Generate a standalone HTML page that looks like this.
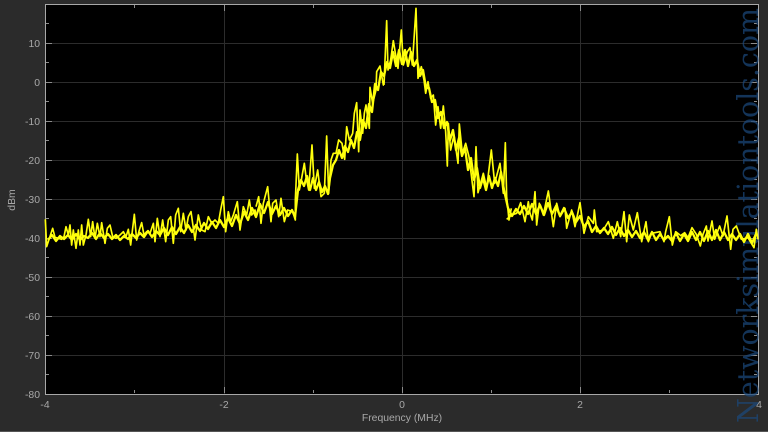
<!DOCTYPE html>
<html><head><meta charset="utf-8"><style>
html,body{margin:0;padding:0;background:#2b2b2b;width:768px;height:432px;overflow:hidden}
svg{display:block}
text{font-family:"Liberation Sans",sans-serif;font-size:10.4px;fill:#a8a8a8}
.t polyline{fill:none;stroke:#ffff08;stroke-width:5;stroke-linejoin:round}
.t polyline.c{stroke-width:2.3}
</style></head><body>
<svg width="768" height="432" viewBox="0 0 768 432" xmlns="http://www.w3.org/2000/svg">
<defs>
<filter id="b" x="-5%" y="-5%" width="110%" height="110%"><feGaussianBlur stdDeviation="0.35"/></filter>
<filter id="s" x="-5%" y="-5%" width="110%" height="110%"><feGaussianBlur stdDeviation="0.3"/></filter>
</defs>
<rect width="768" height="432" fill="#2b2b2b"/>
<rect y="431" width="768" height="1" fill="#555"/>
<rect x="45" y="4" width="714" height="390" fill="#000"/>
<g stroke="#2c2c2c" stroke-width="1">
<path d="M45 43.5H758M45 82.5H758M45 121.5H758M45 160.5H758M45 199.5H758M45 238.5H758M45 277.5H758M45 316.5H758M45 355.5H758"/>
<path d="M224.5 4V394M402.5 4V394M580.5 4V394"/>
</g>
<g stroke="#8c8c8c" stroke-width="1">
<path d="M46 43.5h6M46 82.5h6M46 121.5h6M46 160.5h6M46 199.5h6M46 238.5h6M46 277.5h6M46 316.5h6M46 355.5h6"/>
<path d="M46 23.5h3M46 62.5h3M46 101.5h3M46 140.5h3M46 179.5h3M46 218.5h3M46 257.5h3M46 296.5h3M46 335.5h3M46 374.5h3"/>
<path d="M757 43.5h-6M757 82.5h-6M757 121.5h-6M757 160.5h-6M757 199.5h-6M757 238.5h-6M757 277.5h-6M757 316.5h-6M757 355.5h-6"/>
<path d="M757 23.5h-3M757 62.5h-3M757 101.5h-3M757 140.5h-3M757 179.5h-3M757 218.5h-3M757 257.5h-3M757 296.5h-3M757 335.5h-3M757 374.5h-3"/>
<path d="M224.5 5v6M402.5 5v6M580.5 5v6M224.5 393v-6M402.5 393v-6M580.5 393v-6"/>
<path d="M134.5 5v3M313.5 5v3M491.5 5v3M669.5 5v3M134.5 393v-3M313.5 393v-3M491.5 393v-3M669.5 393v-3"/>
</g>
<rect x="45.5" y="4.5" width="713" height="390" fill="none" stroke="#a8a8a8" stroke-width="1"/>

<text transform="translate(758,423) rotate(-90)" textLength="415" lengthAdjust="spacing" filter="url(#s)" style="font-family:'DejaVu Serif',serif;font-size:28.5px;fill:#1d4a7c;fill-opacity:.72">Networksimulationtools.com</text>

<g class="t" filter="url(#b)">
<polyline class="c" points="48,240 52,235 56,241 60,236 64,239 68,235 72,240 76,234 80,240 84,236 88,238 92,233 96,239 100,233 104,238 108,234 112,239 116,235 120,240 124,236 128,239 132,234 136,238 140,233 144,237 148,231 152,237 156,231 160,235 164,228 168,235 172,227 176,234 180,227 184,233 188,225 192,232 196,225 200,231 204,223 208,229 212,222 216,228 220,220 224,227 228,218 232,226 236,215 240,224 244,212 248,220 252,208 256,217 260,204 264,213 268,202 272,214 276,206 280,215 284,208 288,216 292,210 295,217 298,190 301,180 304,186 307,176 310,190 313,178 316,190 319,182 322,192 325,186 328,194 330,178 333,165 336,160 339,150 342,158 345,146 348,152 351,140 354,148 357,132 360,140 363,120 366,128 369,104 372,112 375,84 378,90 381,72 384,76 387,62 390,68 393,52 396,66 399,50 402,64 405,50 408,66 411,52 414,66 417,60 420,76 423,70 426,88 429,88 432,102 435,100 438,118 441,112 444,128 447,122 450,140 453,130 456,150 459,138 462,156 465,148 468,170 471,158 474,180 477,168 480,188 483,178 486,190 489,176 492,188 495,178 498,186 501,172 504,190 508,208 512,216 516,209 520,214 524,206 528,214 532,204 536,214 540,205 544,215 548,203 552,214 556,206 560,216 564,208 568,218 572,212 576,222 580,216 584,227 588,221 592,232 596,226 600,233 604,228 608,234 612,227 616,235 620,228 624,236 628,230 632,237 636,231 640,238 644,232 648,240 652,232 656,240 660,234 664,240 668,236 672,241 676,233 680,241 684,234 688,241 692,232 696,240 700,232 704,241 708,231 712,240 716,230 720,240 724,232 728,240 732,234 736,240 740,234 744,242 748,234 752,243 756,234"/>
<polyline transform="translate(0,180) scale(.33333)" points="136,118 140,200 148,175 158,145 165,172 175,175 185,178 192,170 198,140 205,165 210,135 215,195 220,150 228,205 235,150 240,195 245,135 250,195 258,165 265,118 272,170 278,125 285,175 292,130 300,170 305,128 315,190 322,145 330,135 338,170 348,175 360,165 370,155 378,170 385,148 392,195 403,103 410,180 418,150 425,128 432,165 440,155 450,160 460,130 465,185 472,115 480,170 488,120 497,185 505,120 512,110 520,190 527,105 535,85 542,155 550,100 558,150 565,110 573,95 585,180 595,105 605,150 615,155 625,110 635,130 645,120 655,130 662,90 670,50 677,155 685,95 692,125 700,105 712,65 720,150 730,80 740,105 748,60 755,105 765,90 768,110"/>
<polyline transform="translate(256,0) scale(.33333)" points="0,620 8,590 15,670 22,610 35,560 45,665 50,610 60,600 68,650 75,595 85,665 95,630 110,635 118,660 118,600 124,462 130,570 135,545 145,490 150,530 158,570 168,435 175,565 185,510 195,590 205,580 212,408 218,580 225,480 232,460 240,460 248,420 258,430 266,478 272,380 280,420 290,400 295,340 302,308 308,455 312,330 320,400 325,340 330,315 340,385 342,262 350,310 360,270 362,215 372,198 382,255 384,255"/>
<polyline transform="translate(384,0) scale(.33333)" points="0,255 8,62 12,210 20,180 28,122 35,165 42,205 52,90 58,195 70,155 78,143 85,195 96,25 102,235 112,200 120,240 125,280 132,245 140,295 148,285 155,375 162,320 170,385 178,318 185,395 190,498 193,370 200,450 210,405 222,490 226,372 235,460 245,430 255,470 270,590 276,440 282,578 298,520 308,565 322,450 332,550 348,490 358,580 364,428 368,590 375,660 382,625"/>
<polyline transform="translate(500,180) scale(.33333)" points="20,118 35,105 50,100 62,68 75,125 85,65 90,100 97,120 105,35 110,135 118,70 130,105 145,33 160,140 170,70 180,110 195,85 200,145 215,90 225,140 240,68 252,160 265,110 280,130 283,90 290,155 310,150 325,125 340,175 352,125 362,170 372,95 380,185 388,105 400,150 412,98 425,185 438,125 445,185 455,160 480,155 492,185 497,155 508,110 517,195 527,155 540,165"/>
<polyline transform="translate(668,216) scale(.33333)" points="36,60 50,50 60,65 72,35 85,55 97,90 105,55 115,30 120,75 132,15 140,70 155,30 165,60 177,0 188,100 195,40 205,30 220,70 240,65 258,95 265,40 270,70"/>
</g>

<g filter="url(#s)">
<g text-anchor="end">
<text x="40" y="47">10</text><text x="40" y="86">0</text><text x="40" y="125">-10</text><text x="40" y="164">-20</text><text x="40" y="203">-30</text><text x="40" y="242">-40</text><text x="40" y="281">-50</text><text x="40" y="320">-60</text><text x="40" y="359">-70</text><text x="40" y="398">-80</text>
</g>
<g text-anchor="middle">
<text x="45" y="408">-4</text><text x="224" y="408">-2</text><text x="402" y="408">0</text><text x="580" y="408">2</text><text x="759" y="408">4</text>
<text x="402" y="421">Frequency (MHz)</text>
<text transform="translate(15,200) rotate(-90)">dBm</text>
</g>
</g>
</svg>
</body></html>
